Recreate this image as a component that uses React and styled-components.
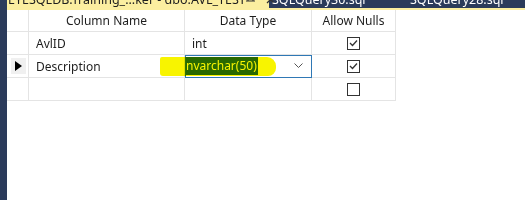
import React from 'react';
import styled, { createGlobalStyle } from 'styled-components';

const GlobalStyle = createGlobalStyle`
  html, body {
    margin: 0;
    padding: 0;
    background: #ffffff;
  }
  body {
    font-family: "Noto Sans", "Open Sans", "Liberation Sans", sans-serif;
    font-size: 12px;
    color: #1e1e1e;
  }
`;

const Page = styled.div`
  display: flex;
  width: 525px;
  height: 200px;
  overflow: hidden;
  background: #ffffff;
`;

const SideStrip = styled.div`
  width: 7px;
  flex: none;
  background: #2b3b5b;
`;

const Main = styled.div`
  flex: 1;
  display: flex;
  flex-direction: column;
  min-width: 0;
`;

const TabBar = styled.div`
  height: 8px;
  display: flex;
  background: #2b3b5b;
  overflow: hidden;
`;

const Tab = styled.div`
  display: flex;
  align-items: flex-start;
  width: ${p => p.width}px;
  flex: none;
  padding-left: ${p => p.pad}px;
  box-sizing: border-box;
  background: ${p => (p.active ? '#fbeea0' : 'transparent')};
  color: ${p => (p.active ? '#1e1e1e' : '#ffffff')};
  font-size: 12.5px;
  line-height: 16px;
  white-space: nowrap;
`;

const TabLabel = styled.span`
  margin-top: -8px;
`;

const TabIcons = styled.span`
  display: flex;
  gap: 11px;
  margin-left: auto;
  margin-right: 11px;
  margin-top: -4px;
`;

const TabRule = styled.div`
  height: 2px;
  background: #fbeea0;
`;

const Table = styled.div`
  position: relative;
  display: grid;
  grid-template-columns: 22px 156px 127px 84px;
  grid-auto-rows: 23px;
  grid-template-rows: 22px;
  width: max-content;
`;

const Cell = styled.div`
  display: flex;
  align-items: center;
  justify-content: ${p => (p.center ? 'center' : 'flex-start')};
  padding-left: ${p => (p.center ? 0 : 7)}px;
  border-right: 1px solid #e4e4e4;
  border-bottom: 1px solid #e4e4e4;
  box-sizing: border-box;
  white-space: nowrap;
  position: relative;
`;

const HeadCell = styled(Cell)`
  justify-content: center;
  padding-left: 0;
  padding-bottom: 1px;
`;

const SelectorCell = styled(Cell)`
  padding-left: 4px;
`;

const RowMarker = styled.div`
  width: 15px;
  height: 16px;
  background: #f0f0f0;
  display: flex;
  align-items: center;
  justify-content: center;
`;

const ComboCell = styled(Cell)`
  padding-left: 1px;
  padding-right: 8px;
  outline: 1px solid #2f78b5;
  outline-offset: -1px;
  z-index: 1;
`;

const Selected = styled.span`
  background: #2a6ec8;
  color: #ffffff;
  line-height: 18px;
  padding-right: 1px;
`;

const Chevron = styled.svg`
  margin-left: auto;
`;

const Highlighter = styled.div`
  position: absolute;
  left: 153px;
  top: 47px;
  width: 116px;
  height: 19px;
  background: #f8f400;
  border-radius: 2px 9px 8px 3px;
  mix-blend-mode: multiply;
  z-index: 2;
  pointer-events: none;
`;

const Check = styled.span`
  width: 13px;
  height: 13px;
  box-sizing: border-box;
  border: 1.5px solid #333333;
  display: flex;
  align-items: center;
  justify-content: center;
`;

function CheckBox({ checked }) {
  return (
    <Check>
      {checked && (
        <svg width="9" height="8" viewBox="0 0 9 8">
          <path d="M1 4 L3.5 6.5 L8 1.5" fill="none" stroke="#333" strokeWidth="1.3" />
        </svg>
      )}
    </Check>
  );
}

const rows = [
  { name: 'AvlID', type: 'int', nulls: true },
  { name: 'Description', type: 'nvarchar(50)', nulls: true, current: true },
  { name: '', type: '', nulls: false },
];

export default function App() {
  return (
    <>
      <GlobalStyle />
      <Page>
        <SideStrip />
        <Main>
          <TabBar>
            <Tab active width={262} pad={1}>
              <TabLabel>EYESQLDB.Training_...ker - dbo.AVL_TEST</TabLabel>
              <TabIcons>
                <svg width="9" height="8" viewBox="0 0 9 8">
                  <path d="M2 0 H7 V5 H2 Z M0 5 H9" stroke="#333" strokeWidth="1.2" fill="none" />
                </svg>
                <svg width="9" height="8" viewBox="0 0 9 8">
                  <path d="M1 0 L8 7 M8 0 L1 7" stroke="#333" strokeWidth="1.3" />
                </svg>
              </TabIcons>
            </Tab>
            <Tab width={138} pad={3}>
              <TabLabel>SQLQuery30.sql</TabLabel>
            </Tab>
            <Tab width={110} pad={3}>
              <TabLabel>SQLQuery28.sql</TabLabel>
            </Tab>
          </TabBar>
          <TabRule />
          <Table>
            <Cell />
            <HeadCell>Column Name</HeadCell>
            <HeadCell>Data Type</HeadCell>
            <HeadCell>Allow Nulls</HeadCell>
            {rows.map((r, i) => (
              <React.Fragment key={i}>
                <SelectorCell>
                  {r.current && (
                    <RowMarker>
                      <svg width="7" height="10" viewBox="0 0 7 10">
                        <path d="M0 0 L7 5 L0 10 Z" fill="#000" />
                      </svg>
                    </RowMarker>
                  )}
                </SelectorCell>
                <Cell>{r.name}</Cell>
                {r.current ? (
                  <ComboCell>
                    <Selected>{r.type}</Selected>
                    <Chevron width="9" height="6" viewBox="0 0 9 6">
                      <path d="M0.5 0.5 L4.5 4.5 L8.5 0.5" fill="none" stroke="#555" strokeWidth="1" />
                    </Chevron>
                  </ComboCell>
                ) : (
                  <Cell>{r.type}</Cell>
                )}
                <Cell center>
                  <CheckBox checked={r.nulls} />
                </Cell>
              </React.Fragment>
            ))}
            <Highlighter />
          </Table>
        </Main>
      </Page>
    </>
  );
}
